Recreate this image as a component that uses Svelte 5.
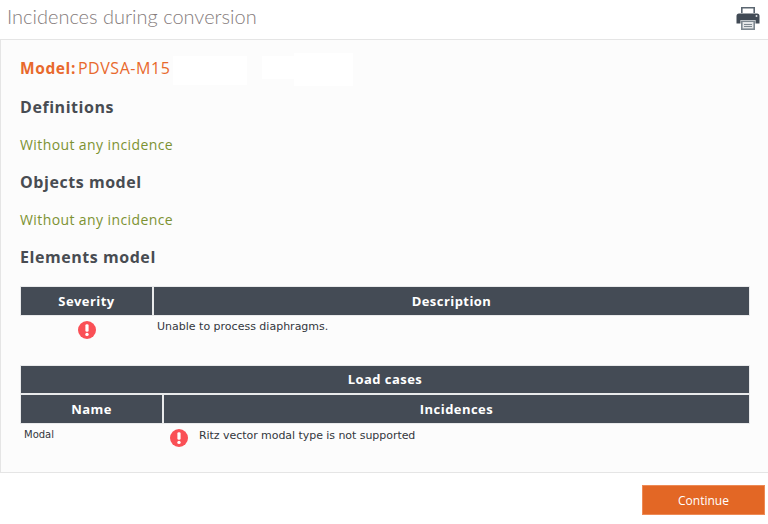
<script lang="ts">
	const sections = [
		{ title: 'Definitions', note: 'Without any incidence' },
		{ title: 'Objects model', note: 'Without any incidence' }
	];
</script>

{#snippet alertIcon()}
	<svg class="alert-icon" viewBox="0 0 18 18" width="18" height="18" aria-hidden="true">
		<circle cx="9" cy="9" r="9" fill="#fa5056" />
		<rect x="7.4" y="3.2" width="3.2" height="7.6" rx="1.4" fill="#fff" />
		<circle cx="9" cy="13.4" r="1.7" fill="#fff" />
	</svg>
{/snippet}

<div class="page">
	<header class="top">
		<h1>Incidences during conversion</h1>
		<svg class="printer" viewBox="0 0 24 24" width="24" height="24" aria-hidden="true">
			<path d="M5 1h14v6h-1.600V2.600H6.600V7H5z" fill="#5b6671" />
			<path d="M3 7.500h18a2.500 2.500 0 0 1 2.500 2.500v7.500H19.500V14h-15v3.500H.5V10A2.500 2.500 0 0 1 3 7.500z" fill="#414a55" />
			<circle cx="20.500" cy="10" r="1" fill="#dfe3e6" />
			<path d="M5 14.500h14V24H5z" fill="#7e8890" />
			<path d="M6.600 16h10.800v6.400H6.600z" fill="#e4e6e8" />
			<path d="M8 18h8v1H8zM8 20h8v1H8z" fill="#7e8890" />
		</svg>
	</header>

	<main class="panel">
		<div class="model">
			<strong>Model:</strong><span>PDVSA-M15</span>
			<i class="patch one"></i>
			<i class="patch two"></i>
			<i class="patch three"></i>
		</div>

		{#each sections as s}
			<h2>{s.title}</h2>
			<p class="ok">{s.note}</p>
		{/each}

		<h2>Elements model</h2>

		<section class="grid first">
			<div class="head two-col severity">
				<div class="th">Severity</div>
				<div class="th">Description</div>
			</div>
			<div class="row two-col severity">
				<div class="center">{@render alertIcon()}</div>
				<div class="desc">Unable to process diaphragms.</div>
			</div>
		</section>

		<section class="grid second">
			<div class="head">
				<div class="th short">Load cases</div>
			</div>
			<div class="head two-col name">
				<div class="th">Name</div>
				<div class="th">Incidences</div>
			</div>
			<div class="row two-col name">
				<div class="small">Modal</div>
				<div class="incidence">{@render alertIcon()}<span>Ritz vector modal type is not supported</span></div>
			</div>
		</section>
	</main>

	<footer class="actions">
		<button type="button">Continue</button>
	</footer>
</div>

<style>
	:global(body) {
		background: #fff;
	}

	.page {
		width: 768px;
		height: 524px;
		overflow: hidden;
		display: flex;
		flex-direction: column;
		font-family: 'Open Sans', sans-serif;
	}

	.top {
		height: 39px;
		flex: none;
		display: flex;
		align-items: center;
		justify-content: space-between;
		padding: 0 8px 0 7px;
	}

	h1 {
		margin: -7px 0 0;
		font-family: Lato, sans-serif;
		font-size: 20px;
		font-weight: 300;
		color: #857c7c;
	}

	.printer {
		margin-top: -4px;
	}

	.panel {
		height: 434px;
		flex: none;
		box-sizing: border-box;
		background: #fcfcfc;
		border: 1px solid #e5e5e5;
		border-width: 1px 0 1px 1px;
		padding: 17px 18px 0 19px;
	}

	.model {
		position: relative;
		display: flex;
		gap: 2px;
		height: 22px;
		margin-bottom: 16px;
		align-items: center;
		color: #e8692c;
		font-size: 15.500px;
		letter-spacing: 0.6px;
	}

	.model span {
		font-size: 16px;
		letter-spacing: 0.55px;
	}

	.patch {
		position: absolute;
		background: #fff;
	}

	.patch.one {
		left: 153px;
		top: -1px;
		width: 74px;
		height: 29px;
	}

	.patch.two {
		left: 242px;
		top: -1px;
		width: 34px;
		height: 23px;
	}

	.patch.three {
		left: 274px;
		top: -4px;
		width: 59px;
		height: 33px;
	}

	h2 {
		margin: 14px 0 0;
		height: 24px;
		line-height: 24px;
		font-size: 16px;
		font-weight: 700;
		letter-spacing: 0.55px;
		color: #484c52;
	}

	.ok {
		margin: 14px 0 0;
		height: 23px;
		line-height: 23px;
		font-size: 14px;
		letter-spacing: 0.4px;
		color: #7c9232;
	}

	.grid {
		width: 730px;
		display: flex;
		flex-direction: column;
	}

	.first {
		margin-top: 17px;
	}

	.second {
		margin-top: 17px;
	}

	.head {
		display: grid;
		gap: 2px;
		padding: 1px;
		background: #e9eaeb;
	}

	.two-col.severity {
		grid-template-columns: 131px 1fr;
	}

	.two-col.name {
		grid-template-columns: 141px 1fr;
	}

	.row {
		display: grid;
		gap: 2px;
		padding: 0 1px;
		font-family: 'DejaVu Sans', sans-serif;
		font-size: 11px;
		color: #33373c;
	}

	.th {
		height: 28px;
		line-height: 28px;
		background: #444b55;
		color: #fff;
		text-align: center;
		font-size: 13px;
		font-weight: 700;
		letter-spacing: 0.45px;
	}

	.th.short {
		height: 27px;
		line-height: 27px;
	}

	.center {
		height: 32px;
	}

	.alert-icon {
		display: block;
	}

	.center .alert-icon {
		margin: 5px auto 0;
	}

	.desc {
		padding: 4px 0 0 3px;
	}

	.small {
		padding: 5px 0 0 3px;
		font-size: 10px;
	}

	.incidence {
		display: flex;
		gap: 11px;
		padding: 5px 0 0 6px;
	}

	.incidence span {
		letter-spacing: -0.05px;
	}

	.actions {
		flex: 1;
		display: flex;
		justify-content: flex-end;
		padding: 12px 3px 0 0;
	}

	button {
		width: 123px;
		height: 30px;
		background: #e36725;
		border: 1px solid #ee8a55;
		color: #fff;
		font-family: 'Open Sans', sans-serif;
		font-size: 12px;
		padding: 0;
	}
</style>
